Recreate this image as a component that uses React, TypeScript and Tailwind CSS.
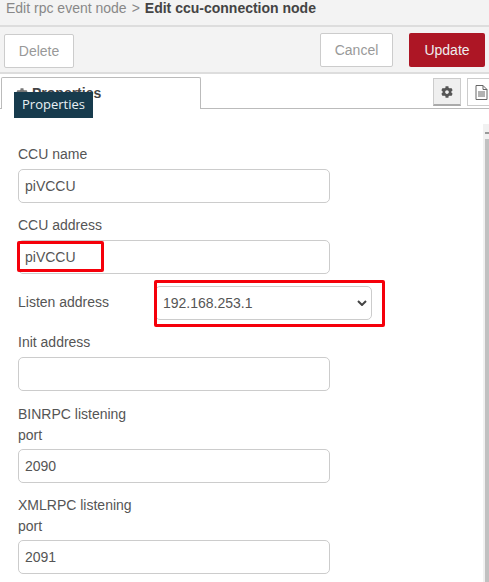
import React from "react";
import { FaCog } from "react-icons/fa";

function Row({ label, value, two, extra }: { label: React.ReactNode; value: string; two?: boolean; extra?: boolean }) {
  return (
    <div className={extra ? "mb-[13px]" : "mb-3"}>
      <label className={"block w-[120px] text-[14px] text-[#555] " + (two ? "mb-[3px] leading-[21px]" : "mb-[5px] leading-[20px]")}>{label}</label>
      <div className="box-border flex h-[34px] w-[312px] items-center rounded-[5px] border border-[#ccc] bg-white px-[6px] text-[14px] text-[#555]">{value}</div>
    </div>
  );
}

export default function App() {
  return (
    <div className="relative h-[582px] w-[489px] overflow-hidden bg-white font-['Liberation_Sans',sans-serif]">
      <div className="box-border flex h-[27px] items-start border-b-2 border-[#ddd] bg-[#f3f3f3] pl-[6px] pt-0 text-[14px] leading-[17px] text-[#888]">
        <span>Edit rpc event node</span>
        <span className="mx-[5px]">&gt;</span>
        <b className="text-[#444]">Edit ccu-connection node</b>
      </div>
      <div className="box-border flex h-[47px] items-start justify-between border-b-2 border-[#ddd] bg-[#f3f3f3] pl-[4px] pr-[4px] pt-[6px] text-[14px]">
        <div className="mt-[1px] box-border flex h-[34px] w-[70px] items-center justify-center rounded-[2px] border border-[#ccc] bg-white text-[#999]">Delete</div>
        <div className="flex gap-[16px]">
          <div className="box-border flex h-[34px] w-[73px] items-center justify-center rounded-[2px] border border-[#ccc] bg-white text-[#999]">Cancel</div>
          <div className="box-border flex h-[34px] w-[76px] items-center justify-center rounded-[2px] bg-[#ad1625] text-[#eee]">Update</div>
        </div>
      </div>
      <div className="box-border flex h-[35px] items-end justify-between border-b border-[#bbb] pl-[1px]">
        <div className="relative -mb-px box-border flex h-[32px] w-[200px] items-center gap-[4px] rounded-t-[2px] border border-b-0 border-[#bbb] bg-white pl-[14px] text-[14px] font-bold text-[#444]">
          <FaCog className="text-[12px] text-[#777]" />
          <span>Properties</span>
        </div>
        <div className="mr-[-6px] flex gap-[6px] self-start pt-[4px]">
          <div className="box-border flex h-[28px] w-[28px] items-center justify-center border border-b-2 border-[#ccc] border-b-[#aaa] bg-[#efefef] text-[12px] text-[#555]"><FaCog /></div>
          <div className="box-border flex h-[28px] w-[28px] items-center justify-center border border-[#ccc] bg-white">
            <svg width="13" height="15" viewBox="0 0 13 15" fill="none" stroke="#666" strokeWidth="1"><path d="M1 .5h7l4 4v10H1z" /><path d="M8 .5v4h4M3 7h7M3 9h7M3 11h7" /></svg>
          </div>
        </div>
      </div>
      <div className="px-[18px] pt-[35px]">
        <Row label="CCU name" value="piVCCU" />
        <Row label="CCU address" value="piVCCU" />
        <div className="mb-3 flex h-[34px]">
          <label className="w-[137px] pt-[6px] text-[14px] leading-[20px] text-[#555]">Listen address</label>
          <div className="box-border flex h-[34px] w-[217px] items-center justify-between rounded-[5px] border border-[#ccc] bg-white pl-[7px] pr-[4px] text-[14px] text-[#555]">
            <span>192.168.253.1</span>
            <svg width="10" height="6" viewBox="0 0 10 6" fill="none" stroke="#444" strokeWidth="2"><path d="M1 1l4 4 4-4" /></svg>
          </div>
        </div>
        <Row label="Init address" value="" extra />
        <Row label="BINRPC listening port" value="2090" two />
        <Row label="XMLRPC listening port" value="2091" two />
      </div>

      <div className="absolute left-[14px] top-[92px] flex h-[26px] w-[79px] items-center justify-center bg-[#173b4d] font-['Open_Sans',sans-serif] text-[13px] text-[#e8f0f4]">Properties</div>
      <div className="absolute left-[17px] top-[241px] box-border h-[31px] w-[87px] rounded-[2px] border-[3px] border-[#f5000a]" />
      <div className="absolute left-[154px] top-[280px] box-border h-[47px] w-[231px] rounded-[2px] border-[3px] border-[#f5000a]" />
      <div className="absolute bottom-0 right-0 top-[124px] w-[6px] bg-[#f1f1f1]">
        <div className="absolute left-[2px] right-0 top-[8px] h-[2px] bg-[#999]" />
        <div className="absolute bottom-0 left-[2px] right-0 top-[15px] bg-[#c1c1c1]" />
      </div>
    </div>
  );
}
